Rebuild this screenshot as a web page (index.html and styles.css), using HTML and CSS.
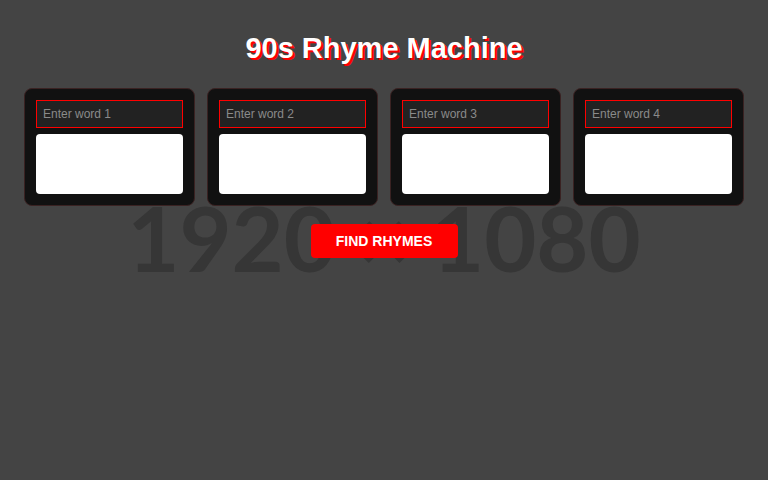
FILE: index.html
```html
<!DOCTYPE html>
<html>
<head>
<meta charset="utf-8">
<link rel="stylesheet" href="styles.css">
</head>
<body>
<div class="watermark">1920 × 1080</div>
<main class="app">
  <h1 class="title">90s Rhyme Machine</h1>
  <div class="cards">
    <div class="card">
      <input class="word" type="text" placeholder="Enter word 1">
      <div class="result"></div>
    </div>
    <div class="card">
      <input class="word" type="text" placeholder="Enter word 2">
      <div class="result"></div>
    </div>
    <div class="card">
      <input class="word" type="text" placeholder="Enter word 3">
      <div class="result"></div>
    </div>
    <div class="card">
      <input class="word" type="text" placeholder="Enter word 4">
      <div class="result"></div>
    </div>
  </div>
  <button class="find">FIND RHYMES</button>
</main>
</body>
</html>
```
FILE: styles.css
```css
html, body {
  margin: 0;
  padding: 0;
  height: 100%;
}
body {
  background: #444444;
  font-family: "Liberation Sans", Arial, sans-serif;
  position: relative;
  overflow: hidden;
}
.watermark {
  position: absolute;
  left: 0;
  right: 0;
  top: 183px;
  text-align: center;
  font-family: Lato, sans-serif;
  font-weight: 700;
  font-size: 90px;
  line-height: 108px;
  color: #363636;
  z-index: 0;
  white-space: nowrap;
}
.app {
  position: relative;
  z-index: 1;
  display: flex;
  flex-direction: column;
  align-items: center;
  padding: 32px 24px 0;
}
.title {
  margin: 0;
  font-size: 29px;
  line-height: 32px;
  font-weight: bold;
  color: #ffffff;
  text-shadow: 2px 2px 0 #ff0000;
}
.cards {
  margin-top: 24px;
  width: 720px;
  display: grid;
  grid-template-columns: repeat(4, 1fr);
  gap: 12px;
}
.card {
  background: #111111;
  border: 1px solid #3a2222;
  border-radius: 8px;
  padding: 11px;
  display: flex;
  flex-direction: column;
  gap: 6px;
}
.word {
  box-sizing: border-box;
  width: 100%;
  height: 28px;
  margin: 0;
  border: 1px solid #ff0000;
  background: #222222;
  color: #ffffff;
  font-family: "Liberation Sans", Arial, sans-serif;
  font-size: 12px;
  padding: 0 6px;
  outline: none;
}
.word::placeholder {
  color: #8a8a8a;
}
.result {
  height: 60px;
  background: #ffffff;
  border-radius: 4px;
}
.find {
  margin-top: 18px;
  width: 147px;
  height: 34px;
  border: none;
  border-radius: 4px;
  background: #ff0000;
  color: #ffffff;
  font-family: "Liberation Sans", Arial, sans-serif;
  font-weight: bold;
  font-size: 14px;
  cursor: pointer;
}
```
